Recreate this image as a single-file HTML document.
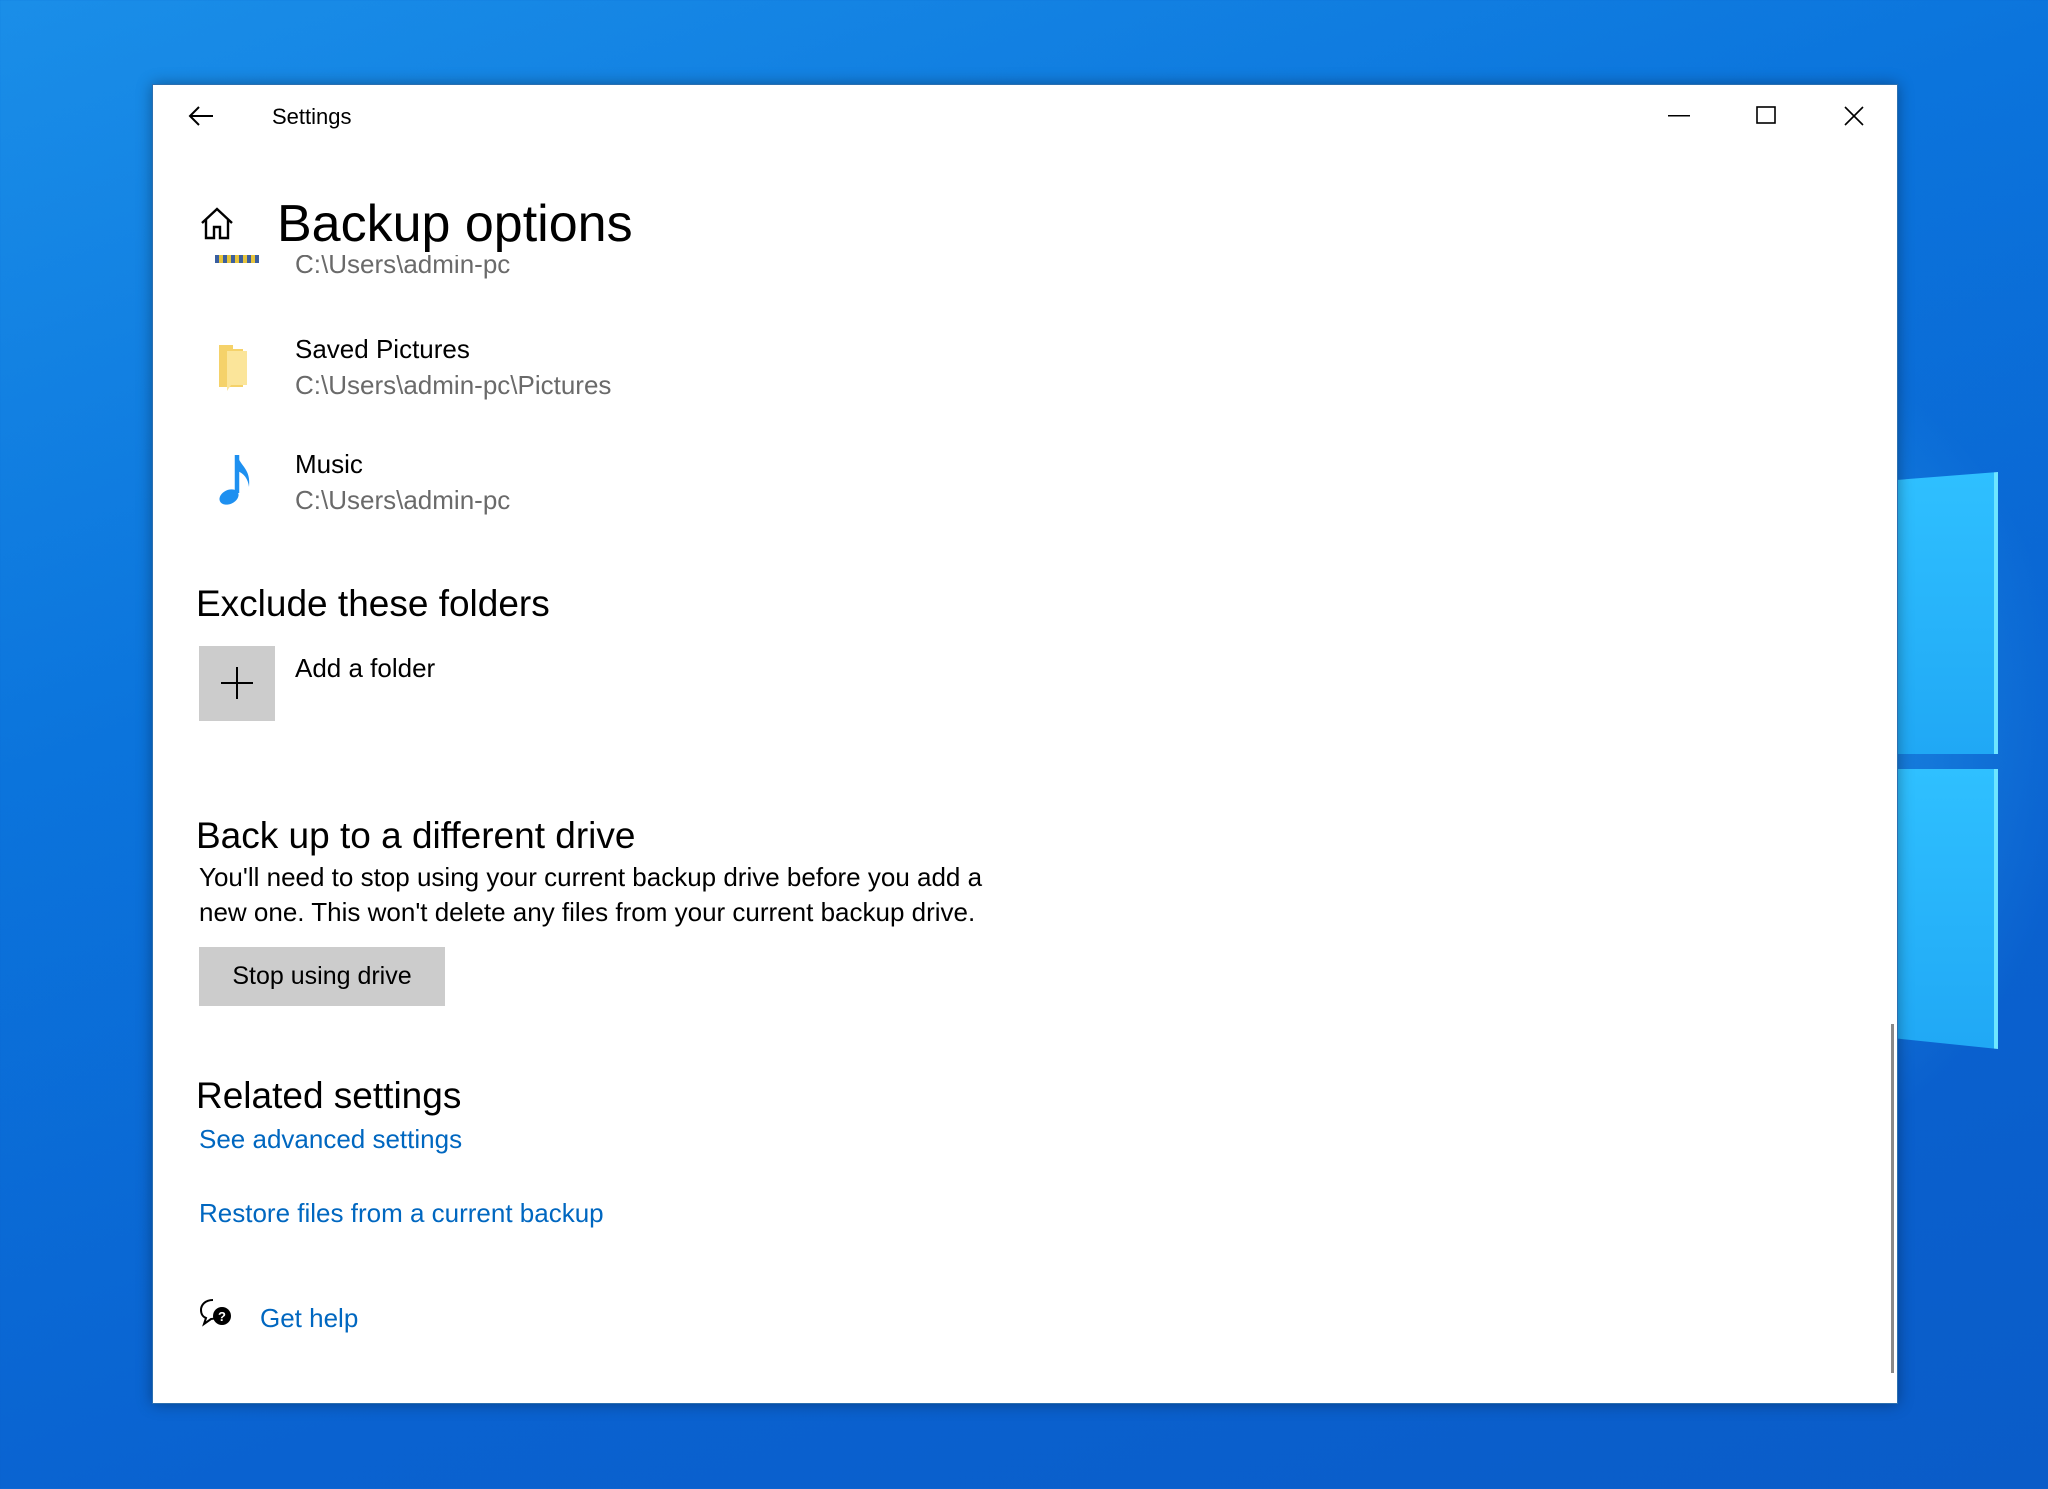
<!DOCTYPE html>
<html><head><meta charset="utf-8"><style>
*{margin:0;padding:0;box-sizing:border-box}
body{width:2048px;height:1489px;overflow:hidden;position:relative;font-family:"Liberation Sans",sans-serif;
background:linear-gradient(160deg,#1a8ee8 0%,#0b74dc 35%,#0a62d0 70%,#0a5cc8 100%);}
.glow{position:absolute;left:1500px;top:300px;width:600px;height:900px;background:radial-gradient(ellipse at 40% 50%,rgba(60,200,255,.45),rgba(0,0,0,0) 65%)}
.pane{position:absolute;background:linear-gradient(180deg,#2fc0ff,#20a8f5);border-right:4px solid #6ee6ff}
.win{position:absolute;left:152px;top:84px;width:1746px;height:1320px;background:#fff;box-shadow:0 0 14px rgba(0,0,0,.35);border:1px solid #2b6fb0}
.t{position:absolute;white-space:nowrap;color:#000;line-height:1}
.g{color:#6a6a6a}
.l{color:#0067c0}
</style></head><body>
<div class="glow"></div>
<div class="pane" style="left:1890px;top:472px;width:108px;height:282px;clip-path:polygon(0 3%,100% 0,100% 100%,0 100%)"></div>
<div class="pane" style="left:1890px;top:769px;width:108px;height:280px;clip-path:polygon(0 0,100% 0,100% 100%,0 96%)"></div>
<div class="win">
 <svg style="position:absolute;left:34px;top:20px" width="28" height="22" viewBox="0 0 28 22"><path d="M12 2 L3 11 L12 20 M3 11 H26" stroke="#000" stroke-width="2" fill="none"/></svg>
 <div class="t" style="left:119px;top:21px;font-size:22px">Settings</div>
 <svg style="position:absolute;left:1515px;top:30px" width="22" height="2"><rect width="22" height="1.5" fill="#000"/></svg>
 <svg style="position:absolute;left:1603px;top:21px" width="20" height="18"><rect x="1" y="1" width="18" height="16" fill="none" stroke="#000" stroke-width="1.6"/></svg>
 <svg style="position:absolute;left:1691px;top:21px" width="20" height="20"><path d="M1 1L19 19M19 1L1 19" stroke="#000" stroke-width="1.6"/></svg>
 <svg style="position:absolute;left:46px;top:120px" width="36" height="36" viewBox="0 0 36 36"><path d="M3 18 L18 4 L33 18 M7 14 V33 H15 V22 H21 V33 H29 V14" stroke="#000" stroke-width="2.4" fill="none"/></svg>
 <div class="t" style="left:124px;top:113px;font-size:52px">Backup options</div>
 <div style="position:absolute;left:0;top:170px;width:1740px;height:1140px;overflow:hidden">
  <div style="position:absolute;left:62px;top:0px;width:44px;height:8px;background:repeating-linear-gradient(90deg,#3a5fa0 0 4px,#e7c33a 4px 8px)"></div>
  <div class="t g" style="left:142px;top:-4px;font-size:26px">C:\Users\admin-pc</div>
  <svg style="position:absolute;left:64px;top:88px" width="36" height="48" viewBox="0 0 36 48"><path d="M2 2 H16 V6 H26 V44 H2Z" fill="#f5d26a"/><path d="M10 8 H30 V42 H14 L10 48Z" fill="#fbe59a"/></svg>
  <div class="t" style="left:142px;top:81px;font-size:26px">Saved Pictures</div>
  <div class="t g" style="left:142px;top:117px;font-size:26px">C:\Users\admin-pc\Pictures</div>
  <svg style="position:absolute;left:64px;top:198px" width="40" height="56" viewBox="0 0 40 56"><path d="M20 2 V40" stroke="#1e90f0" stroke-width="4.5"/><path d="M20 2 C24 14 34 16 32 34 C31 26 27 20 20 18Z" fill="#1e90f0"/><ellipse cx="12" cy="44" rx="10" ry="7" transform="rotate(-25 12 44)" fill="#1e90f0"/></svg>
  <div class="t" style="left:142px;top:196px;font-size:26px">Music</div>
  <div class="t g" style="left:142px;top:232px;font-size:26px">C:\Users\admin-pc</div>
  <div class="t" style="left:43px;top:330px;font-size:37px">Exclude these folders</div>
  <div style="position:absolute;left:46px;top:391px;width:76px;height:75px;background:#ccc"></div>
  <svg style="position:absolute;left:68px;top:412px" width="32" height="32"><path d="M16 0V32M0 16H32" stroke="#000" stroke-width="2"/></svg>
  <div class="t" style="left:142px;top:400px;font-size:26px">Add a folder</div>
  <div class="t" style="left:43px;top:562px;font-size:37px">Back up to a different drive</div>
  <div class="t" style="left:46px;top:605px;font-size:26px;line-height:35px">You'll need to stop using your current backup drive before you add a<br>new one. This won't delete any files from your current backup drive.</div>
  <div style="position:absolute;left:46px;top:692px;width:246px;height:59px;background:#ccc"></div>
  <div class="t" style="left:46px;top:709px;width:246px;text-align:center;font-size:25px">Stop using drive</div>
  <div class="t" style="left:43px;top:822px;font-size:37px">Related settings</div>
  <div class="t l" style="left:46px;top:871px;font-size:26px">See advanced settings</div>
  <div class="t l" style="left:46px;top:945px;font-size:26px">Restore files from a current backup</div>
  <svg style="position:absolute;left:46px;top:1043px" width="34" height="32" viewBox="0 0 34 32"><path d="M14 2 C6 2 2 7 2 12 C2 16 4 19 7 20 L5 26 L12 21 C16 21 22 18 22 12" stroke="#000" stroke-width="2" fill="none"/><circle cx="23" cy="18" r="9" fill="#000"/><text x="23" y="23" font-size="13" font-family="Liberation Sans" font-weight="bold" fill="#fff" text-anchor="middle">?</text></svg>
  <div class="t l" style="left:107px;top:1050px;font-size:26px">Get help</div>
 </div>
 <div style="position:absolute;left:1738px;top:939px;width:3px;height:349px;background:#8a8a8a"></div>
</div>
</body></html>
